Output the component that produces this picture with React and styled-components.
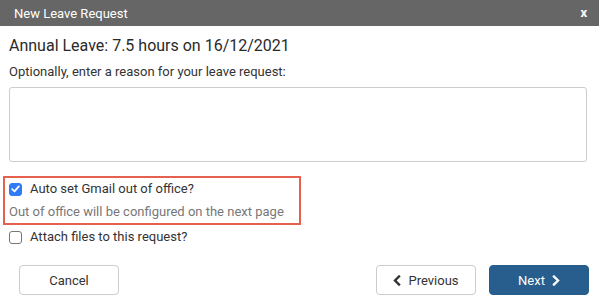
import React, { useState } from 'react';
import styled, { createGlobalStyle } from 'styled-components';

const GlobalStyle = createGlobalStyle`
  html, body {
    margin: 0;
    padding: 0;
    background: #fff;
  }
  body {
    font-family: Roboto, "Liberation Sans", Arial, sans-serif;
    color: #333;
  }
`;

const StyledDialog = styled.div`
  width: 599px;
  height: 303px;
  display: flex;
  flex-direction: column;
  background: #fff;
  overflow: hidden;
`;

const StyledTitleBar = styled.div`
  height: 26px;
  flex: none;
  display: flex;
  align-items: center;
  justify-content: space-between;
  padding: 0 12px 0 14px;
  background: #666;
  color: #fff;
  font-size: 13px;

  .close {
    font-size: 13px;
    font-weight: 700;
    line-height: 1;
    padding-bottom: 1px;
  }
`;

const StyledBody = styled.div`
  display: flex;
  flex-direction: column;
  padding: 10px 12px 0 9px;

  h2 {
    margin: 0;
    font-size: 16px;
    font-weight: 400;
    line-height: 20px;
    color: #2a2a2a;
  }

  .prompt {
    margin: 8px 0 0;
    font-size: 13px;
    line-height: 16px;
  }
`;

const StyledTextArea = styled.textarea`
  box-sizing: border-box;
  width: 578px;
  height: 75px;
  margin-top: 7px;
  border: 1px solid #ccc;
  border-radius: 3px;
  resize: none;
  font: inherit;
  outline: none;
`;

const StyledHighlight = styled.div`
  box-sizing: border-box;
  width: 298px;
  margin: 14px 0 0 -6px;
  padding: 3px 0 3px 4px;
  border: 2px solid #e6604f;

  .hint {
    margin: 7px 0 0 0;
    font-size: 13px;
    line-height: 16px;
    color: #777;
  }
`;

const StyledCheckRow = styled.label`
  display: flex;
  align-items: center;
  gap: 8px;
  font-size: 13px;
  line-height: 16px;
  color: #333;
  margin: ${({ $offset }) => $offset || 0};
  cursor: pointer;
`;

const StyledBox = styled.span`
  width: 13px;
  height: 13px;
  box-sizing: border-box;
  border-radius: 3px;
  display: inline-flex;
  align-items: center;
  justify-content: center;
  flex: none;
  background: ${({ $checked }) => ($checked ? '#2f7cf6' : '#fff')};
  border: 1px solid ${({ $checked }) => ($checked ? '#2f7cf6' : '#767676')};
`;

const StyledFooter = styled.div`
  display: flex;
  align-items: center;
  gap: 13px;
  padding: 20px 10px 0 19px;

  .spacer {
    flex: 1;
  }
`;

const StyledButton = styled.button`
  width: 100px;
  height: 30px;
  box-sizing: border-box;
  display: inline-flex;
  align-items: center;
  justify-content: center;
  gap: 7px;
  border-radius: 4px;
  font-family: inherit;
  font-size: 13px;
  cursor: pointer;
  border: 1px solid ${({ $primary }) => ($primary ? '#285e8e' : '#ccc')};
  background: ${({ $primary }) => ($primary ? '#285e8e' : '#fff')};
  color: ${({ $primary }) => ($primary ? '#fff' : '#333')};
`;

const Check = () => (
  <svg width="9" height="8" viewBox="0 0 9 8">
    <path d="M1.2 4.2 L3.5 6.4 L7.8 1.4" fill="none" stroke="#fff" strokeWidth="1.8" strokeLinecap="round" strokeLinejoin="round" />
  </svg>
);

const Chevron = ({ left }) => (
  <svg width="8" height="11" viewBox="0 0 8 11">
    <path
      d={left ? 'M6 1.5 L2 5.5 L6 9.5' : 'M2 1.5 L6 5.5 L2 9.5'}
      fill="none"
      stroke="currentColor"
      strokeWidth="2.4"
      strokeLinecap="square"
      strokeLinejoin="miter"
    />
  </svg>
);

const CheckRow = ({ checked, onToggle, children, offset }) => (
  <StyledCheckRow $offset={offset} onClick={onToggle}>
    <StyledBox $checked={checked}>{checked && <Check />}</StyledBox>
    {children}
  </StyledCheckRow>
);

const App = () => {
  const [gmail, setGmail] = useState(true);
  const [attach, setAttach] = useState(false);

  return (
    <>
      <GlobalStyle />
      <StyledDialog>
        <StyledTitleBar>
          <span>New Leave Request</span>
          <span className="close">x</span>
        </StyledTitleBar>
        <StyledBody>
          <h2>Annual Leave: 7.5 hours on 16/12/2021</h2>
          <p className="prompt">Optionally, enter a reason for your leave request:</p>
          <StyledTextArea />
          <StyledHighlight>
            <CheckRow checked={gmail} onToggle={() => setGmail(!gmail)}>
              Auto set Gmail out of office?
            </CheckRow>
            <p className="hint">Out of office will be configured on the next page</p>
          </StyledHighlight>
          <CheckRow checked={attach} onToggle={() => setAttach(!attach)} offset="4px 0 0 0">
            Attach files to this request?
          </CheckRow>
        </StyledBody>
        <StyledFooter>
          <StyledButton>Cancel</StyledButton>
          <span className="spacer" />
          <StyledButton>
            <Chevron left /> Previous
          </StyledButton>
          <StyledButton $primary>
            Next <Chevron />
          </StyledButton>
        </StyledFooter>
      </StyledDialog>
    </>
  );
};

export default App;
